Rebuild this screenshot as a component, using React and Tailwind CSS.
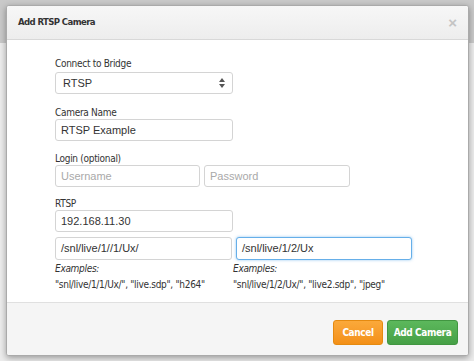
import React from 'react';

const cond = { fontFamily: '"DejaVu Sans Condensed", "Liberation Sans", sans-serif' };
const sans = { fontFamily: '"Liberation Sans", Arial, sans-serif' };

const Field = ({ value, placeholder, className = '', focused }) => (
  <div
    className={`rounded-[3px] border bg-white px-[5px] flex items-center text-[11px] ${
      focused ? 'border-[#66afe9] shadow-[0_0_3px_rgba(102,175,233,0.7)]' : 'border-[#d4d4d4]'
    } ${className}`}
    style={sans}
  >
    {value ? <span className="text-[#333]">{value}</span> : <span className="text-[#a9a9a9]">{placeholder}</span>}
  </div>
);

const Label = ({ children, className = '' }) => (
  <div className={`text-[10px] tracking-[-0.3px] text-[#333] leading-[12px] ${className}`} style={cond}>{children}</div>
);

export default function App() {
  return (
    <div className="w-[474px] h-[361px] bg-[#ececec] relative overflow-hidden">
      <div className="absolute inset-x-0 top-0 h-[43px] bg-[#c9c9c9]" />
      <div className="absolute left-[6px] top-[5px] w-[463px] h-[351px] bg-white border border-[#aaa] rounded-[3px] shadow-[0_2px_6px_rgba(0,0,0,0.35)] flex flex-col overflow-hidden">
        <div className="h-[34px] shrink-0 bg-gradient-to-b from-[#f7f7f7] to-[#ededed] border-b border-[#d8d8d8] flex items-center justify-between pl-[11px] pr-[11px]">
          <span className="text-[9.5px] tracking-[-0.6px] font-bold text-[#333]" style={cond}>Add RTSP Camera</span>
          <span className="text-[15px] font-bold text-[#c4c4c4] leading-none" style={sans}>×</span>
        </div>
        <div className="flex-1 pl-[48px] pt-[18px]">
          <Label>Connect to Bridge</Label>
          <div className="mt-[2px] w-[178px] h-[22px] rounded-[3px] border border-[#d4d4d4] bg-white px-[7px] flex items-center justify-between text-[11px] text-[#333]" style={sans}>
            <span>RTSP</span>
            <svg width="6" height="10" viewBox="0 0 6 10"><path d="M3 0L6 4H0z M3 10L0 6h6z" fill="#555" /></svg>
          </div>
          <Label className="mt-[13px]">Camera Name</Label>
          <Field value="RTSP Example" className="w-[178px] h-[22px]" />
          <Label className="mt-[12px]">Login (optional)</Label>
          <div className="flex gap-[4px]">
            <Field placeholder="Username" className="w-[145px] h-[22px]" />
            <Field placeholder="Password" className="w-[146px] h-[22px]" />
          </div>
          <Label className="mt-[11px]">RTSP</Label>
          <Field value="192.168.11.30" className="w-[178px] h-[22px]" />
          <div className="flex gap-[4px] mt-[5px]">
            <Field value="/snl/live/1//1/Ux/" className="w-[177px] h-[23px]" />
            <Field value="/snl/live/1/2/Ux" className="w-[176px] h-[23px]" focused />
          </div>
          <div className="flex mt-[1px] text-[10px] tracking-[-0.3px] text-[#333]" style={cond}>
            <div className="w-[178px]">
              <div className="italic leading-[16px]">Examples:</div>
              <div className="leading-[16px]">"snl/live/1/1/Ux/", "live.sdp", "h264"</div>
            </div>
            <div>
              <div className="italic leading-[16px]">Examples:</div>
              <div className="leading-[16px]">"snl/live/1/2/Ux/", "live2.sdp", "jpeg"</div>
            </div>
          </div>
        </div>
        <div className="h-[53px] shrink-0 bg-[#f5f5f5] border-t border-[#e0e0e0] flex items-start justify-end gap-[4px] pr-[10px] pt-[17px]">
          <div className="h-[25px] w-[50px] rounded-[3px] bg-gradient-to-b from-[#fba93a] to-[#f39016] border border-[#e58a10] text-white text-[10px] tracking-[-0.4px] font-bold flex items-center justify-center" style={cond}>Cancel</div>
          <div className="h-[25px] w-[71px] rounded-[3px] bg-gradient-to-b from-[#5cb85c] to-[#46a046] border border-[#419641] text-white text-[10px] tracking-[-0.4px] font-bold flex items-center justify-center" style={cond}>Add Camera</div>
        </div>
      </div>
    </div>
  );
}
